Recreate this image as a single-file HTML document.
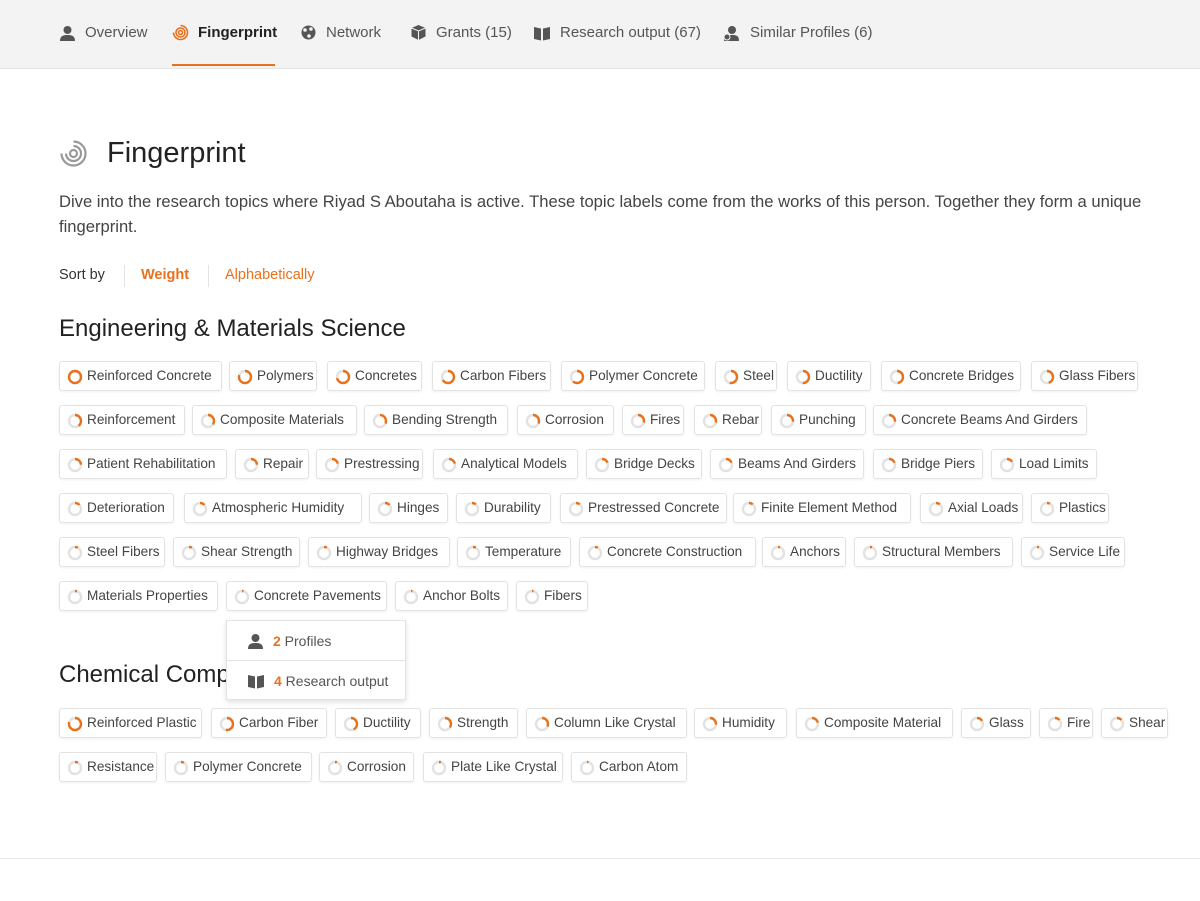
<!DOCTYPE html>
<html><head><meta charset="utf-8"><style>
*{margin:0;padding:0;box-sizing:border-box}
body{width:1200px;height:901px;background:#fff;font-family:"Liberation Sans",sans-serif;color:#333;position:relative;overflow:hidden}
.nav{position:absolute;left:0;top:0;width:1200px;height:69px;background:#f3f3f3;border-bottom:1px solid #e4e4e4}
.ni{position:absolute;top:24px;font-size:15px;color:#555;display:flex;align-items:center;gap:9px;white-space:nowrap}
.ni b{color:#222}
.ul{position:absolute;left:172px;top:64px;width:103px;height:2px;background:#e9711c}
.c{position:absolute;height:30px;border:1px solid #e3e3e3;border-radius:3px;box-shadow:0 1px 2px rgba(0,0,0,.06);font-size:13.6px;color:#444;white-space:nowrap;overflow:hidden;line-height:28px;padding-left:27px;background:#fff}
.c svg{position:absolute;left:7px;top:7px}
h2{position:absolute;left:59px;font-size:24px;font-weight:normal;color:#222}
.pop{position:absolute;left:226px;top:620px;width:180px;height:80px;background:#fff;border:1px solid #e3e3e3;box-shadow:0 2px 5px rgba(0,0,0,.12)}
.pop div{height:40px;display:flex;align-items:center;padding-left:20px;gap:9px;font-size:14px;color:#555}
.pop b{color:#e9711c}
</style></head><body>
<div class="nav">
<div class="ni" style="left:59px"><svg width="17" height="16" viewBox="0 0 17 16"><circle cx="8.5" cy="5" r="4" fill="#555"/><path d="M1 16c0-5 3-6 7.5-6s7.5 1 7.5 6z" fill="#555"/></svg>Overview</div>
<div class="ni" style="left:172px"><svg width="17" height="17" viewBox="0 0 17 17" fill="none" stroke="#e9711c" stroke-width="1.6"><circle cx="8.5" cy="8.5" r="2"/><circle cx="8.5" cy="8.5" r="4.5"/><path d="M8.5 1.5a7 7 0 1 1-7 7"/></svg><b>Fingerprint</b></div>
<div class="ni" style="left:300px"><svg width="17" height="17" viewBox="0 0 17 17"><circle cx="8.5" cy="8.5" r="7" fill="#555"/><circle cx="5" cy="6" r="1.8" fill="#f3f3f3"/><circle cx="11" cy="5" r="1.8" fill="#f3f3f3"/><circle cx="9" cy="12" r="1.8" fill="#f3f3f3"/></svg>Network</div>
<div class="ni" style="left:410px"><svg width="17" height="17" viewBox="0 0 17 17"><path d="M8.5 1l7 3v8.5l-7 3.5-7-3.5V4z" fill="#555"/><path d="M1.5 4l7 3 7-3M8.5 7v9" stroke="#f3f3f3" stroke-width="1" fill="none"/></svg>Grants (15)</div>
<div class="ni" style="left:533px"><svg width="18" height="16" viewBox="0 0 18 16"><path d="M1 2l7 1.5v12L1 14zM17 2l-7 1.5v12l7-1.5z" fill="#555"/></svg>Research output (67)</div>
<div class="ni" style="left:722px"><svg width="19" height="16" viewBox="0 0 19 16"><circle cx="10" cy="5" r="4" fill="#555"/><path d="M2 16c0-5 3-6 8-6s7 1 7 6z" fill="#555"/><circle cx="5" cy="12" r="3" fill="#555" stroke="#f3f3f3"/></svg>Similar Profiles (6)</div>
<div class="ul"></div>
</div>
<svg style="position:absolute;left:59px;top:139px" width="29" height="29" viewBox="0 0 29 29" fill="none" stroke="#999" stroke-width="2.2"><circle cx="14.5" cy="14.5" r="3.5"/><path d="M14.5 7a7.5 7.5 0 1 1-7.5 7.5"/><path d="M14.5 2.5a12 12 0 1 1-12 12"/></svg>
<div style="position:absolute;left:107px;top:137px;font-size:29px;color:#222">Fingerprint</div>
<div style="position:absolute;left:59px;top:189px;width:1110px;font-size:16.6px;line-height:25px;color:#444">Dive into the research topics where Riyad S Aboutaha is active. These topic labels come from the works of this person. Together they form a unique fingerprint.</div>
<div style="position:absolute;left:59px;top:267px;font-size:14.5px;color:#333">Sort by</div>
<div style="position:absolute;left:124px;top:265px;width:1px;height:22px;background:#e3e3e3"></div>
<div style="position:absolute;left:141px;top:267px;font-size:14.5px;color:#e9711c;font-weight:bold">Weight</div>
<div style="position:absolute;left:208px;top:265px;width:1px;height:22px;background:#e3e3e3"></div>
<div style="position:absolute;left:225px;top:267px;font-size:14.5px;color:#e9711c">Alphabetically</div>
<h2 style="top:315px">Engineering &amp; Materials Science</h2>
<h2 style="top:661px">Chemical Compounds</h2>

<svg width="0" height="0" style="position:absolute"><defs><symbol id="r" viewBox="0 0 16 16"><circle cx="8" cy="8" r="6" fill="none" stroke="#e2e2e2" stroke-width="2.4"/></symbol></defs></svg>

<div class="c" style="left:59px;top:361px;width:163px"><svg width="16" height="16"><use href="#r"/><circle cx="8" cy="8" r="6" fill="none" stroke="#e9711c" stroke-width="2.4" stroke-dasharray="37.7 40" transform="rotate(-90 8 8)"/></svg>Reinforced Concrete</div>
<div class="c" style="left:229px;top:361px;width:88px"><svg width="16" height="16"><use href="#r"/><circle cx="8" cy="8" r="6" fill="none" stroke="#e9711c" stroke-width="2.4" stroke-dasharray="30 40" transform="rotate(-90 8 8)"/></svg>Polymers</div>
<div class="c" style="left:327px;top:361px;width:95px"><svg width="16" height="16"><use href="#r"/><circle cx="8" cy="8" r="6" fill="none" stroke="#e9711c" stroke-width="2.4" stroke-dasharray="27 40" transform="rotate(-90 8 8)"/></svg>Concretes</div>
<div class="c" style="left:432px;top:361px;width:119px"><svg width="16" height="16"><use href="#r"/><circle cx="8" cy="8" r="6" fill="none" stroke="#e9711c" stroke-width="2.4" stroke-dasharray="25 40" transform="rotate(-90 8 8)"/></svg>Carbon Fibers</div>
<div class="c" style="left:561px;top:361px;width:144px"><svg width="16" height="16"><use href="#r"/><circle cx="8" cy="8" r="6" fill="none" stroke="#e9711c" stroke-width="2.4" stroke-dasharray="23 40" transform="rotate(-90 8 8)"/></svg>Polymer Concrete</div>
<div class="c" style="left:715px;top:361px;width:62px"><svg width="16" height="16"><use href="#r"/><circle cx="8" cy="8" r="6" fill="none" stroke="#e9711c" stroke-width="2.4" stroke-dasharray="20 40" transform="rotate(-90 8 8)"/></svg>Steel</div>
<div class="c" style="left:787px;top:361px;width:84px"><svg width="16" height="16"><use href="#r"/><circle cx="8" cy="8" r="6" fill="none" stroke="#e9711c" stroke-width="2.4" stroke-dasharray="19 40" transform="rotate(-90 8 8)"/></svg>Ductility</div>
<div class="c" style="left:881px;top:361px;width:140px"><svg width="16" height="16"><use href="#r"/><circle cx="8" cy="8" r="6" fill="none" stroke="#e9711c" stroke-width="2.4" stroke-dasharray="18 40" transform="rotate(-90 8 8)"/></svg>Concrete Bridges</div>
<div class="c" style="left:1031px;top:361px;width:107px"><svg width="16" height="16"><use href="#r"/><circle cx="8" cy="8" r="6" fill="none" stroke="#e9711c" stroke-width="2.4" stroke-dasharray="17 40" transform="rotate(-90 8 8)"/></svg>Glass Fibers</div>

<div class="c" style="left:59px;top:405px;width:126px"><svg width="16" height="16"><use href="#r"/><circle cx="8" cy="8" r="6" fill="none" stroke="#e9711c" stroke-width="2.4" stroke-dasharray="15 40" transform="rotate(-90 8 8)"/></svg>Reinforcement</div>
<div class="c" style="left:192px;top:405px;width:165px"><svg width="16" height="16"><use href="#r"/><circle cx="8" cy="8" r="6" fill="none" stroke="#e9711c" stroke-width="2.4" stroke-dasharray="13 40" transform="rotate(-90 8 8)"/></svg>Composite Materials</div>
<div class="c" style="left:364px;top:405px;width:144px"><svg width="16" height="16"><use href="#r"/><circle cx="8" cy="8" r="6" fill="none" stroke="#e9711c" stroke-width="2.4" stroke-dasharray="12 40" transform="rotate(-90 8 8)"/></svg>Bending Strength</div>
<div class="c" style="left:517px;top:405px;width:97px"><svg width="16" height="16"><use href="#r"/><circle cx="8" cy="8" r="6" fill="none" stroke="#e9711c" stroke-width="2.4" stroke-dasharray="12 40" transform="rotate(-90 8 8)"/></svg>Corrosion</div>
<div class="c" style="left:622px;top:405px;width:62px"><svg width="16" height="16"><use href="#r"/><circle cx="8" cy="8" r="6" fill="none" stroke="#e9711c" stroke-width="2.4" stroke-dasharray="11 40" transform="rotate(-90 8 8)"/></svg>Fires</div>
<div class="c" style="left:694px;top:405px;width:68px"><svg width="16" height="16"><use href="#r"/><circle cx="8" cy="8" r="6" fill="none" stroke="#e9711c" stroke-width="2.4" stroke-dasharray="11 40" transform="rotate(-90 8 8)"/></svg>Rebar</div>
<div class="c" style="left:771px;top:405px;width:95px"><svg width="16" height="16"><use href="#r"/><circle cx="8" cy="8" r="6" fill="none" stroke="#e9711c" stroke-width="2.4" stroke-dasharray="10 40" transform="rotate(-90 8 8)"/></svg>Punching</div>
<div class="c" style="left:873px;top:405px;width:214px"><svg width="16" height="16"><use href="#r"/><circle cx="8" cy="8" r="6" fill="none" stroke="#e9711c" stroke-width="2.4" stroke-dasharray="10 40" transform="rotate(-90 8 8)"/></svg>Concrete Beams And Girders</div>

<div class="c" style="left:59px;top:449px;width:168px"><svg width="16" height="16"><use href="#r"/><circle cx="8" cy="8" r="6" fill="none" stroke="#e9711c" stroke-width="2.4" stroke-dasharray="9 40" transform="rotate(-90 8 8)"/></svg>Patient Rehabilitation</div>
<div class="c" style="left:235px;top:449px;width:74px"><svg width="16" height="16"><use href="#r"/><circle cx="8" cy="8" r="6" fill="none" stroke="#e9711c" stroke-width="2.4" stroke-dasharray="9 40" transform="rotate(-90 8 8)"/></svg>Repair</div>
<div class="c" style="left:316px;top:449px;width:107px"><svg width="16" height="16"><use href="#r"/><circle cx="8" cy="8" r="6" fill="none" stroke="#e9711c" stroke-width="2.4" stroke-dasharray="8 40" transform="rotate(-90 8 8)"/></svg>Prestressing</div>
<div class="c" style="left:433px;top:449px;width:145px"><svg width="16" height="16"><use href="#r"/><circle cx="8" cy="8" r="6" fill="none" stroke="#e9711c" stroke-width="2.4" stroke-dasharray="8 40" transform="rotate(-90 8 8)"/></svg>Analytical Models</div>
<div class="c" style="left:586px;top:449px;width:116px"><svg width="16" height="16"><use href="#r"/><circle cx="8" cy="8" r="6" fill="none" stroke="#e9711c" stroke-width="2.4" stroke-dasharray="7 40" transform="rotate(-90 8 8)"/></svg>Bridge Decks</div>
<div class="c" style="left:710px;top:449px;width:154px"><svg width="16" height="16"><use href="#r"/><circle cx="8" cy="8" r="6" fill="none" stroke="#e9711c" stroke-width="2.4" stroke-dasharray="7 40" transform="rotate(-90 8 8)"/></svg>Beams And Girders</div>
<div class="c" style="left:873px;top:449px;width:110px"><svg width="16" height="16"><use href="#r"/><circle cx="8" cy="8" r="6" fill="none" stroke="#e9711c" stroke-width="2.4" stroke-dasharray="7 40" transform="rotate(-90 8 8)"/></svg>Bridge Piers</div>
<div class="c" style="left:991px;top:449px;width:106px"><svg width="16" height="16"><use href="#r"/><circle cx="8" cy="8" r="6" fill="none" stroke="#e9711c" stroke-width="2.4" stroke-dasharray="6 40" transform="rotate(-90 8 8)"/></svg>Load Limits</div>

<div class="c" style="left:59px;top:493px;width:115px"><svg width="16" height="16"><use href="#r"/><circle cx="8" cy="8" r="6" fill="none" stroke="#e9711c" stroke-width="2.4" stroke-dasharray="5 40" transform="rotate(-90 8 8)"/></svg>Deterioration</div>
<div class="c" style="left:184px;top:493px;width:178px"><svg width="16" height="16"><use href="#r"/><circle cx="8" cy="8" r="6" fill="none" stroke="#e9711c" stroke-width="2.4" stroke-dasharray="5 40" transform="rotate(-90 8 8)"/></svg>Atmospheric Humidity</div>
<div class="c" style="left:369px;top:493px;width:79px"><svg width="16" height="16"><use href="#r"/><circle cx="8" cy="8" r="6" fill="none" stroke="#e9711c" stroke-width="2.4" stroke-dasharray="5 40" transform="rotate(-90 8 8)"/></svg>Hinges</div>
<div class="c" style="left:456px;top:493px;width:95px"><svg width="16" height="16"><use href="#r"/><circle cx="8" cy="8" r="6" fill="none" stroke="#e9711c" stroke-width="2.4" stroke-dasharray="4 40" transform="rotate(-90 8 8)"/></svg>Durability</div>
<div class="c" style="left:560px;top:493px;width:167px"><svg width="16" height="16"><use href="#r"/><circle cx="8" cy="8" r="6" fill="none" stroke="#e9711c" stroke-width="2.4" stroke-dasharray="4 40" transform="rotate(-90 8 8)"/></svg>Prestressed Concrete</div>
<div class="c" style="left:733px;top:493px;width:178px"><svg width="16" height="16"><use href="#r"/><circle cx="8" cy="8" r="6" fill="none" stroke="#e9711c" stroke-width="2.4" stroke-dasharray="4 40" transform="rotate(-90 8 8)"/></svg>Finite Element Method</div>
<div class="c" style="left:920px;top:493px;width:103px"><svg width="16" height="16"><use href="#r"/><circle cx="8" cy="8" r="6" fill="none" stroke="#e9711c" stroke-width="2.4" stroke-dasharray="4 40" transform="rotate(-90 8 8)"/></svg>Axial Loads</div>
<div class="c" style="left:1031px;top:493px;width:78px"><svg width="16" height="16"><use href="#r"/><circle cx="8" cy="8" r="6" fill="none" stroke="#e9711c" stroke-width="2.4" stroke-dasharray="3 40" transform="rotate(-90 8 8)"/></svg>Plastics</div>

<div class="c" style="left:59px;top:537px;width:106px"><svg width="16" height="16"><use href="#r"/><circle cx="8" cy="8" r="6" fill="none" stroke="#e9711c" stroke-width="2.4" stroke-dasharray="3 40" transform="rotate(-90 8 8)"/></svg>Steel Fibers</div>
<div class="c" style="left:173px;top:537px;width:127px"><svg width="16" height="16"><use href="#r"/><circle cx="8" cy="8" r="6" fill="none" stroke="#e9711c" stroke-width="2.4" stroke-dasharray="3 40" transform="rotate(-90 8 8)"/></svg>Shear Strength</div>
<div class="c" style="left:308px;top:537px;width:142px"><svg width="16" height="16"><use href="#r"/><circle cx="8" cy="8" r="6" fill="none" stroke="#e9711c" stroke-width="2.4" stroke-dasharray="3 40" transform="rotate(-90 8 8)"/></svg>Highway Bridges</div>
<div class="c" style="left:457px;top:537px;width:114px"><svg width="16" height="16"><use href="#r"/><circle cx="8" cy="8" r="6" fill="none" stroke="#e9711c" stroke-width="2.4" stroke-dasharray="3 40" transform="rotate(-90 8 8)"/></svg>Temperature</div>
<div class="c" style="left:579px;top:537px;width:177px"><svg width="16" height="16"><use href="#r"/><circle cx="8" cy="8" r="6" fill="none" stroke="#e9711c" stroke-width="2.4" stroke-dasharray="3 40" transform="rotate(-90 8 8)"/></svg>Concrete Construction</div>
<div class="c" style="left:762px;top:537px;width:84px"><svg width="16" height="16"><use href="#r"/><circle cx="8" cy="8" r="6" fill="none" stroke="#e9711c" stroke-width="2.4" stroke-dasharray="2 40" transform="rotate(-90 8 8)"/></svg>Anchors</div>
<div class="c" style="left:854px;top:537px;width:159px"><svg width="16" height="16"><use href="#r"/><circle cx="8" cy="8" r="6" fill="none" stroke="#e9711c" stroke-width="2.4" stroke-dasharray="2 40" transform="rotate(-90 8 8)"/></svg>Structural Members</div>
<div class="c" style="left:1021px;top:537px;width:104px"><svg width="16" height="16"><use href="#r"/><circle cx="8" cy="8" r="6" fill="none" stroke="#e9711c" stroke-width="2.4" stroke-dasharray="2 40" transform="rotate(-90 8 8)"/></svg>Service Life</div>

<div class="c" style="left:59px;top:581px;width:159px"><svg width="16" height="16"><use href="#r"/><circle cx="8" cy="8" r="6" fill="none" stroke="#e9711c" stroke-width="2.4" stroke-dasharray="2 40" transform="rotate(-90 8 8)"/></svg>Materials Properties</div>
<div class="c" style="left:226px;top:581px;width:161px"><svg width="16" height="16"><use href="#r"/><circle cx="8" cy="8" r="6" fill="none" stroke="#e9711c" stroke-width="2.4" stroke-dasharray="1.5 40" transform="rotate(-90 8 8)"/></svg>Concrete Pavements</div>
<div class="c" style="left:395px;top:581px;width:113px"><svg width="16" height="16"><use href="#r"/><circle cx="8" cy="8" r="6" fill="none" stroke="#e9711c" stroke-width="2.4" stroke-dasharray="1.5 40" transform="rotate(-90 8 8)"/></svg>Anchor Bolts</div>
<div class="c" style="left:516px;top:581px;width:72px"><svg width="16" height="16"><use href="#r"/><circle cx="8" cy="8" r="6" fill="none" stroke="#e9711c" stroke-width="2.4" stroke-dasharray="1.5 40" transform="rotate(-90 8 8)"/></svg>Fibers</div>

<div class="pop">
<div style="border-bottom:1px solid #e3e3e3"><svg width="17" height="16" viewBox="0 0 17 16"><circle cx="8.5" cy="5" r="4" fill="#555"/><path d="M1 16c0-5 3-6 7.5-6s7.5 1 7.5 6z" fill="#555"/></svg><span><b>2</b> Profiles</span></div>
<div><svg width="18" height="16" viewBox="0 0 18 16"><path d="M1 2l7 1.5v12L1 14zM17 2l-7 1.5v12l7-1.5z" fill="#555"/></svg><span><b>4</b> Research output</span></div>
</div>

<div class="c" style="left:59px;top:708px;width:143px"><svg width="16" height="16"><use href="#r"/><circle cx="8" cy="8" r="6" fill="none" stroke="#e9711c" stroke-width="2.4" stroke-dasharray="30 40" transform="rotate(-90 8 8)"/></svg>Reinforced Plastic</div>
<div class="c" style="left:211px;top:708px;width:116px"><svg width="16" height="16"><use href="#r"/><circle cx="8" cy="8" r="6" fill="none" stroke="#e9711c" stroke-width="2.4" stroke-dasharray="20 40" transform="rotate(-90 8 8)"/></svg>Carbon Fiber</div>
<div class="c" style="left:335px;top:708px;width:86px"><svg width="16" height="16"><use href="#r"/><circle cx="8" cy="8" r="6" fill="none" stroke="#e9711c" stroke-width="2.4" stroke-dasharray="16 40" transform="rotate(-90 8 8)"/></svg>Ductility</div>
<div class="c" style="left:429px;top:708px;width:89px"><svg width="16" height="16"><use href="#r"/><circle cx="8" cy="8" r="6" fill="none" stroke="#e9711c" stroke-width="2.4" stroke-dasharray="13 40" transform="rotate(-90 8 8)"/></svg>Strength</div>
<div class="c" style="left:526px;top:708px;width:161px"><svg width="16" height="16"><use href="#r"/><circle cx="8" cy="8" r="6" fill="none" stroke="#e9711c" stroke-width="2.4" stroke-dasharray="12 40" transform="rotate(-90 8 8)"/></svg>Column Like Crystal</div>
<div class="c" style="left:694px;top:708px;width:93px"><svg width="16" height="16"><use href="#r"/><circle cx="8" cy="8" r="6" fill="none" stroke="#e9711c" stroke-width="2.4" stroke-dasharray="10 40" transform="rotate(-90 8 8)"/></svg>Humidity</div>
<div class="c" style="left:796px;top:708px;width:157px"><svg width="16" height="16"><use href="#r"/><circle cx="8" cy="8" r="6" fill="none" stroke="#e9711c" stroke-width="2.4" stroke-dasharray="8 40" transform="rotate(-90 8 8)"/></svg>Composite Material</div>
<div class="c" style="left:961px;top:708px;width:70px"><svg width="16" height="16"><use href="#r"/><circle cx="8" cy="8" r="6" fill="none" stroke="#e9711c" stroke-width="2.4" stroke-dasharray="6 40" transform="rotate(-90 8 8)"/></svg>Glass</div>
<div class="c" style="left:1039px;top:708px;width:54px"><svg width="16" height="16"><use href="#r"/><circle cx="8" cy="8" r="6" fill="none" stroke="#e9711c" stroke-width="2.4" stroke-dasharray="5 40" transform="rotate(-90 8 8)"/></svg>Fire</div>
<div class="c" style="left:1101px;top:708px;width:67px"><svg width="16" height="16"><use href="#r"/><circle cx="8" cy="8" r="6" fill="none" stroke="#e9711c" stroke-width="2.4" stroke-dasharray="5 40" transform="rotate(-90 8 8)"/></svg>Shear</div>

<div class="c" style="left:59px;top:752px;width:98px"><svg width="16" height="16"><use href="#r"/><circle cx="8" cy="8" r="6" fill="none" stroke="#e9711c" stroke-width="2.4" stroke-dasharray="3 40" transform="rotate(-90 8 8)"/></svg>Resistance</div>
<div class="c" style="left:165px;top:752px;width:147px"><svg width="16" height="16"><use href="#r"/><circle cx="8" cy="8" r="6" fill="none" stroke="#e9711c" stroke-width="2.4" stroke-dasharray="3 40" transform="rotate(-90 8 8)"/></svg>Polymer Concrete</div>
<div class="c" style="left:319px;top:752px;width:95px"><svg width="16" height="16"><use href="#r"/><circle cx="8" cy="8" r="6" fill="none" stroke="#e9711c" stroke-width="2.4" stroke-dasharray="2 40" transform="rotate(-90 8 8)"/></svg>Corrosion</div>
<div class="c" style="left:423px;top:752px;width:140px"><svg width="16" height="16"><use href="#r"/><circle cx="8" cy="8" r="6" fill="none" stroke="#e9711c" stroke-width="2.4" stroke-dasharray="2 40" transform="rotate(-90 8 8)"/></svg>Plate Like Crystal</div>
<div class="c" style="left:571px;top:752px;width:116px"><svg width="16" height="16"><use href="#r"/><circle cx="8" cy="8" r="6" fill="none" stroke="#e9711c" stroke-width="2.4" stroke-dasharray="1.5 40" transform="rotate(-90 8 8)"/></svg>Carbon Atom</div>

<div style="position:absolute;left:0;top:858px;width:1200px;height:1px;background:#e6e6e6"></div>
</body></html>
